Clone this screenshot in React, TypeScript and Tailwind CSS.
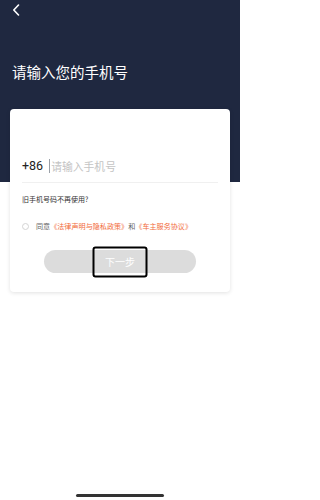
import React from "react";

export default function App() {
  return (
    <div
      className="w-[240px] min-h-[500px] bg-white"
      style={{ fontFamily: '"Noto Sans CJK SC", "Noto Sans", sans-serif' }}
    >
      {/* Header */}
      <div className="h-[182px] bg-[#1f2840] pt-[4px] pl-[12px]">
        <svg width="8" height="12" viewBox="0 0 8 12" fill="none">
          <polyline
            points="6.5,1 1.8,6 6.5,11"
            stroke="#ffffff"
            strokeWidth="1.6"
            strokeLinecap="round"
            strokeLinejoin="round"
          />
        </svg>
        <h1 className="mt-[46px] text-[14.5px] leading-[20px] text-white">请输入您的手机号</h1>
      </div>

      {/* Card */}
      <div className="mx-[10px] -mt-[73px] relative rounded-[4px] bg-white px-[12px] pt-[47px] pb-[19px] shadow-[0_1px_4px_rgba(0,0,0,0.12)]">
        <div className="pb-[6px] border-b border-[#f0f0f0]">
          <div className="flex h-[20px] items-center">
            <span className="text-[12.5px] text-[#222]" style={{ fontFamily: "Roboto, sans-serif" }}>
              +86
            </span>
            <span className="ml-[6px] h-[14px] w-px bg-[#9aa0a8]"></span>
            <span className="ml-[1px] text-[10.8px] text-[#c4c4c4]">请输入手机号</span>
          </div>
        </div>

        <p className="mt-[11px] h-[10px] text-[7px] leading-[10px] text-[#333]">旧手机号码不再使用?</p>

        <div className="mt-[17px] flex h-[10px] items-center">
          <span className="h-[7px] w-[7px] rounded-full border border-[#d4d4d4]"></span>
          <p className="ml-[7px] text-[7.1px] leading-[10px] text-[#666] whitespace-nowrap">
            同意<span className="text-[#f26b3a]">《法律声明与隐私政策》</span>和<span className="text-[#f26b3a]">《车主服务协议》</span>
          </p>
        </div>

        <button
          type="button"
          className="relative mx-auto mt-[19px] flex h-[23px] w-[152px] items-center justify-center rounded-full bg-[#dcdcdc]"
        >
          <span className="absolute left-1/2 top-1/2 h-[31px] w-[55px] -translate-x-1/2 -translate-y-1/2 rounded-[3px] border-2 border-black"></span>
          <span className="text-[10px] text-white">下一步</span>
        </button>
      </div>

      {/* Home indicator */}
      <div className="mx-auto mt-[202px] h-[3px] w-[88px] rounded-full bg-[#333]"></div>
    </div>
  );
}
